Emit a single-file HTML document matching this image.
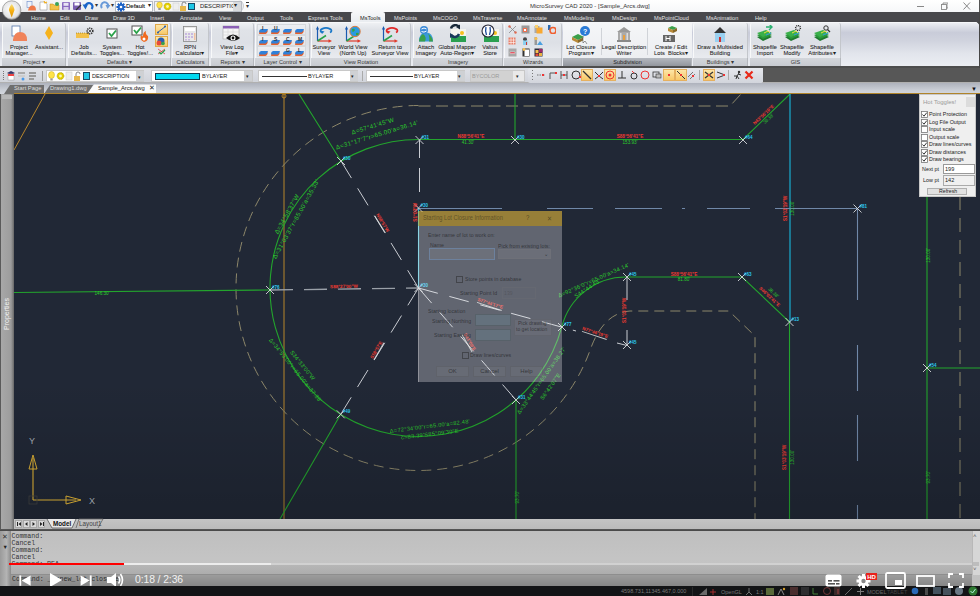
<!DOCTYPE html>
<html><head><meta charset="utf-8">
<style>
*{margin:0;padding:0;box-sizing:border-box}
html,body{width:980px;height:596px;overflow:hidden;background:#212836;font-family:"Liberation Sans",sans-serif}
.a{position:absolute}
.t{position:absolute;white-space:nowrap;line-height:1}

</style></head><body>
<div class="a" style="left:0px;top:0px;width:980px;height:12px;background:linear-gradient(#ffffff,#f6f7f9)"></div>
<div class="a" style="left:22px;top:0px;width:222px;height:12px;background:linear-gradient(#f4f5f7,#e9ebee);border-radius:0 6px 6px 0;border-right:1px solid #c9ccd1"></div>
<svg class="a" style="left:26px;top:1px" width="10" height="10" viewBox="0 0 10 10"><rect x="1" y="0.5" width="5" height="6" fill="#eef3fb" stroke="#6a8ac8" stroke-width=".6"/><path d="M2 9.5 Q3 4.5 6.5 4.5 Q10 4.5 10 9.5Z" fill="#f07a4a"/></svg>
<svg class="a" style="left:38px;top:1px" width="10" height="10" viewBox="0 0 10 10"><path d="M2 1 H7 L9 3 V9 H2Z" fill="#fff" stroke="#999" stroke-width=".6"/><path d="M6 0 L7 2 L9 1" stroke="#f2b01e" stroke-width="1.2" fill="none"/></svg>
<svg class="a" style="left:49px;top:1px" width="11" height="10" viewBox="0 0 11 10"><path d="M1 3 H4 L5 4 H10 V9 H1Z" fill="#f2c24a" stroke="#c98a10" stroke-width=".5"/><circle cx="8" cy="3" r="2" fill="#3aa35a"/></svg>
<svg class="a" style="left:60.5px;top:1px" width="10" height="10" viewBox="0 0 10 10"><rect x="1" y="1" width="8" height="8" rx="1" fill="#8a6ac0"/><rect x="2.5" y="1.8" width="5" height="3" fill="#e8e4f4"/><rect x="2.5" y="6" width="5" height="3" fill="#d8d0ea"/></svg>
<svg class="a" style="left:71.5px;top:1px" width="10" height="10" viewBox="0 0 10 10"><rect x="1" y="1" width="8" height="8" rx="1" fill="#7a5fb0"/><rect x="2.5" y="1.5" width="5" height="3" fill="#fff"/><path d="M4 9 L9 4" stroke="#333" stroke-width="1.2"/></svg>
<svg class="a" style="left:82px;top:1px" width="12" height="10" viewBox="0 0 12 10"><path d="M3.5 6 A3.5 3.5 0 1 1 9.5 8" stroke="#1a64c8" stroke-width="2.2" fill="none"/><path d="M0.5 3.5 L3.5 8.5 L6 3.5Z" fill="#1a64c8"/></svg>
<div class="t" style="left:94.5px;top:2px;font-size:6px;color:#333;">&#9662;</div>
<svg class="a" style="left:99px;top:1px" width="12" height="10" viewBox="0 0 12 10"><path d="M9 6 A3.5 3.5 0 1 0 3 7" stroke="#6a9ad8" stroke-width="2" fill="none"/><path d="M11.5 4 L8.5 8 L6.5 4Z" fill="#6a9ad8"/></svg>
<div class="t" style="left:111px;top:2px;font-size:6px;color:#333;">&#9662;</div>
<div class="a" style="left:115px;top:1px;width:38px;height:11px;background:#fff;border:1px solid #b8bcc4"></div>
<svg class="a" style="left:116px;top:1.5px" width="10" height="10" viewBox="0 0 10 10"><g transform="translate(5,5)" fill="#1f63c6"><circle r="3.2"/><rect x="-1" y="-4.6" width="2" height="9.2"/><rect x="-4.6" y="-1" width="9.2" height="2"/><rect x="-1" y="-4.6" width="2" height="9.2" transform="rotate(45)"/><rect x="-1" y="-4.6" width="2" height="9.2" transform="rotate(-45)"/></g><circle cx="5" cy="5" r="1.3" fill="#fff"/></svg>
<div class="t" style="left:126px;top:3.2px;font-size:6px;color:#111;-webkit-text-stroke:.1px #111">Default</div>
<div class="t" style="left:148px;top:3px;font-size:5.5px;color:#222;">&#9662;</div>
<div class="a" style="left:154px;top:1px;width:88px;height:11px;background:#f4f4f4;border:1px solid #b8bcc4"></div>
<svg class="a" style="left:155px;top:1px" width="9" height="10" viewBox="0 0 9 10"><ellipse cx="4.5" cy="4" rx="2.8" ry="3" fill="#ffe34a" stroke="#c0a000" stroke-width=".4"/><rect x="3.3" y="7" width="2.4" height="2" fill="#999"/></svg>
<svg class="a" style="left:163px;top:2px" width="9" height="9" viewBox="0 0 9 9"><circle cx="4.5" cy="4.5" r="3.4" fill="#e6d200" stroke="#9a8a00" stroke-width=".6" stroke-dasharray="1.2 .6"/><circle cx="4.5" cy="4.5" r="1.4" fill="#fff8b0"/></svg>
<svg class="a" style="left:172px;top:2px" width="8" height="9" viewBox="0 0 8 9"><rect x="1" y="1" width="6" height="7" fill="#eee" stroke="#ccc" stroke-width=".5"/></svg>
<svg class="a" style="left:179px;top:1px" width="9" height="10" viewBox="0 0 9 10"><rect x="1" y="5" width="6" height="5" fill="#e8b84a"/><path d="M3 5 V3 A2 2 0 0 1 7 3" stroke="#888" stroke-width="1" fill="none"/></svg>
<div class="a" style="left:188px;top:3px;width:7px;height:7px;background:#1fc7e6;border:1px solid #1a4a66"></div>
<div class="t" style="left:200px;top:3.5px;font-size:5.8px;color:#222;width:33px;overflow:hidden">DESCRIPTIO</div>
<div class="a" style="left:233px;top:2px;width:8px;height:9px;background:#d8dadd"></div>
<div class="t" style="left:234px;top:3px;font-size:5.5px;color:#222;">&#9662;</div>
<div class="t" style="left:246px;top:2px;font-size:6px;color:#333;border-top:1px solid #333;line-height:6px">&#9662;</div>
<div class="t" style="left:530px;top:3px;font-size:6px;color:#333;">MicroSurvey CAD 2020 - [Sample_Arcs.dwg]</div>
<div class="a" style="left:917px;top:5.5px;width:7px;height:1px;background:#888"></div>
<svg class="a" style="left:939.5px;top:1.5px" width="8" height="8" viewBox="0 0 8 8"><rect x="1.5" y="2.5" width="5" height="5" fill="none" stroke="#888" stroke-width=".9"/><path d="M3 2.5 V1 H8 V6 H6.5" fill="none" stroke="#888" stroke-width=".9"/></svg>
<svg class="a" style="left:962px;top:1px" width="9" height="10" viewBox="0 0 9 10"><path d="M1.5 1.5 L8 8.5 M8 1.5 L1.5 8.5" stroke="#888" stroke-width="1"/></svg>
<div class="a" style="left:0px;top:12px;width:980px;height:10px;background:#48484c"></div>
<div class="a" style="left:351px;top:12px;width:34px;height:10px;background:linear-gradient(#f6f7f9,#e9ecf0);border-radius:2px 2px 0 0"></div>
<div class="t" style="left:31px;top:15.6px;font-size:5.6px;color:#e2e2e2;">Home</div>
<div class="t" style="left:60px;top:15.6px;font-size:5.6px;color:#e2e2e2;">Edit</div>
<div class="t" style="left:85px;top:15.6px;font-size:5.6px;color:#e2e2e2;">Draw</div>
<div class="t" style="left:113px;top:15.6px;font-size:5.6px;color:#e2e2e2;">Draw 3D</div>
<div class="t" style="left:150px;top:15.6px;font-size:5.6px;color:#e2e2e2;">Insert</div>
<div class="t" style="left:180px;top:15.6px;font-size:5.6px;color:#e2e2e2;">Annotate</div>
<div class="t" style="left:219px;top:15.6px;font-size:5.6px;color:#e2e2e2;">View</div>
<div class="t" style="left:247px;top:15.6px;font-size:5.6px;color:#e2e2e2;">Output</div>
<div class="t" style="left:280px;top:15.6px;font-size:5.6px;color:#e2e2e2;">Tools</div>
<div class="t" style="left:308px;top:15.6px;font-size:5.6px;color:#e2e2e2;">Express Tools</div>
<div class="t" style="left:394px;top:15.6px;font-size:5.6px;color:#e2e2e2;">MsPoints</div>
<div class="t" style="left:433px;top:15.6px;font-size:5.6px;color:#e2e2e2;">MsCOGO</div>
<div class="t" style="left:473px;top:15.6px;font-size:5.6px;color:#e2e2e2;">MsTraverse</div>
<div class="t" style="left:517px;top:15.6px;font-size:5.6px;color:#e2e2e2;">MsAnnotate</div>
<div class="t" style="left:564px;top:15.6px;font-size:5.6px;color:#e2e2e2;">MsModeling</div>
<div class="t" style="left:612px;top:15.6px;font-size:5.6px;color:#e2e2e2;">MsDesign</div>
<div class="t" style="left:654px;top:15.6px;font-size:5.6px;color:#e2e2e2;">MsPointCloud</div>
<div class="t" style="left:706px;top:15.6px;font-size:5.6px;color:#e2e2e2;">MsAnimation</div>
<div class="t" style="left:755px;top:15.6px;font-size:5.6px;color:#e2e2e2;">Help</div>
<div class="t" style="left:360px;top:15.6px;font-size:5.6px;color:#222;">MsTools</div>
<svg class="a" style="left:0px;top:0px" width="26" height="22" viewBox="0 0 26 22"><defs><radialGradient id="ab" cx="45%" cy="45%" r="60%"><stop offset="0" stop-color="#ffffff"/><stop offset=".75" stop-color="#e4e4e4"/><stop offset="1" stop-color="#a8a8a8"/></radialGradient><linearGradient id="pb" x1="0" y1="0" x2="0" y2="1"><stop offset="0" stop-color="#f4e080"/><stop offset=".5" stop-color="#f6b010"/><stop offset="1" stop-color="#d89010"/></linearGradient></defs><circle cx="11.7" cy="10.1" r="9.3" fill="url(#ab)" stroke="#8a8a8a" stroke-width=".7"/><path d="M11.7 4 C12.8 5.5 14.5 8 14.5 10 L11.7 17.5 L8.9 10 C8.9 8 10.6 5.5 11.7 4Z" fill="url(#pb)"/></svg>
<div class="a" style="left:0px;top:22px;width:980px;height:45px;background:linear-gradient(#eceef3 0,#dfe1e9 8%,#c9ccd9 22%,#d0d3de 40%,#e2e5ec 70%,#eceef3 100%);border-top:1px solid #f6f7f9"></div>
<div class="a" style="left:2px;top:23px;width:64px;height:44px;background:linear-gradient(#eef0f3 0,#e0e3e8 15%,#dde0e6 45%,#e9ebef 80%,#eceef1 100%);border-left:1px solid #f8f9fa;border-right:1px solid #c3c6cb;border-radius:2px 2px 0 0"></div>
<div class="a" style="left:2px;top:58px;width:64px;height:9px;background:linear-gradient(#d3d6db,#c6c9cf);border-right:1px solid #b5b8bd"></div>
<div class="t" style="left:-66.0px;width:200px;text-align:center;top:59.6px;font-size:5.6px;color:#383838;">Project &#9662;</div>
<div class="a" style="left:68px;top:23px;width:103px;height:44px;background:linear-gradient(#eef0f3 0,#e0e3e8 15%,#dde0e6 45%,#e9ebef 80%,#eceef1 100%);border-left:1px solid #f8f9fa;border-right:1px solid #c3c6cb;border-radius:2px 2px 0 0"></div>
<div class="a" style="left:68px;top:58px;width:103px;height:9px;background:linear-gradient(#d3d6db,#c6c9cf);border-right:1px solid #b5b8bd"></div>
<div class="t" style="left:19.5px;width:200px;text-align:center;top:59.6px;font-size:5.6px;color:#383838;">Defaults &#9662;</div>
<div class="a" style="left:172px;top:23px;width:37px;height:44px;background:linear-gradient(#eef0f3 0,#e0e3e8 15%,#dde0e6 45%,#e9ebef 80%,#eceef1 100%);border-left:1px solid #f8f9fa;border-right:1px solid #c3c6cb;border-radius:2px 2px 0 0"></div>
<div class="a" style="left:172px;top:58px;width:37px;height:9px;background:linear-gradient(#d3d6db,#c6c9cf);border-right:1px solid #b5b8bd"></div>
<div class="t" style="left:90.5px;width:200px;text-align:center;top:59.6px;font-size:5.6px;color:#383838;">Calculators</div>
<div class="a" style="left:211px;top:23px;width:43px;height:44px;background:linear-gradient(#eef0f3 0,#e0e3e8 15%,#dde0e6 45%,#e9ebef 80%,#eceef1 100%);border-left:1px solid #f8f9fa;border-right:1px solid #c3c6cb;border-radius:2px 2px 0 0"></div>
<div class="a" style="left:211px;top:58px;width:43px;height:9px;background:linear-gradient(#d3d6db,#c6c9cf);border-right:1px solid #b5b8bd"></div>
<div class="t" style="left:132.5px;width:200px;text-align:center;top:59.6px;font-size:5.6px;color:#383838;">Reports &#9662;</div>
<div class="a" style="left:255px;top:23px;width:55px;height:44px;background:linear-gradient(#eef0f3 0,#e0e3e8 15%,#dde0e6 45%,#e9ebef 80%,#eceef1 100%);border-left:1px solid #f8f9fa;border-right:1px solid #c3c6cb;border-radius:2px 2px 0 0"></div>
<div class="a" style="left:255px;top:58px;width:55px;height:9px;background:linear-gradient(#d3d6db,#c6c9cf);border-right:1px solid #b5b8bd"></div>
<div class="t" style="left:182.5px;width:200px;text-align:center;top:59.6px;font-size:5.6px;color:#383838;">Layer Control &#9662;</div>
<div class="a" style="left:311px;top:23px;width:100px;height:44px;background:linear-gradient(#eef0f3 0,#e0e3e8 15%,#dde0e6 45%,#e9ebef 80%,#eceef1 100%);border-left:1px solid #f8f9fa;border-right:1px solid #c3c6cb;border-radius:2px 2px 0 0"></div>
<div class="a" style="left:311px;top:58px;width:100px;height:9px;background:linear-gradient(#d3d6db,#c6c9cf);border-right:1px solid #b5b8bd"></div>
<div class="t" style="left:261.0px;width:200px;text-align:center;top:59.6px;font-size:5.6px;color:#383838;">View Rotation</div>
<div class="a" style="left:413px;top:23px;width:90px;height:44px;background:linear-gradient(#eef0f3 0,#e0e3e8 15%,#dde0e6 45%,#e9ebef 80%,#eceef1 100%);border-left:1px solid #f8f9fa;border-right:1px solid #c3c6cb;border-radius:2px 2px 0 0"></div>
<div class="a" style="left:413px;top:58px;width:90px;height:9px;background:linear-gradient(#d3d6db,#c6c9cf);border-right:1px solid #b5b8bd"></div>
<div class="t" style="left:358.0px;width:200px;text-align:center;top:59.6px;font-size:5.6px;color:#383838;">Imagery</div>
<div class="a" style="left:504px;top:23px;width:58px;height:44px;background:linear-gradient(#eef0f3 0,#e0e3e8 15%,#dde0e6 45%,#e9ebef 80%,#eceef1 100%);border-left:1px solid #f8f9fa;border-right:1px solid #c3c6cb;border-radius:2px 2px 0 0"></div>
<div class="a" style="left:504px;top:58px;width:58px;height:9px;background:linear-gradient(#d3d6db,#c6c9cf);border-right:1px solid #b5b8bd"></div>
<div class="t" style="left:433.0px;width:200px;text-align:center;top:59.6px;font-size:5.6px;color:#383838;">Wizards</div>
<div class="a" style="left:563px;top:23px;width:129px;height:44px;background:linear-gradient(#eef0f3 0,#e0e3e8 15%,#dde0e6 45%,#e9ebef 80%,#eceef1 100%);border-left:1px solid #f8f9fa;border-right:1px solid #c3c6cb;border-radius:2px 2px 0 0"></div>
<div class="a" style="left:563px;top:58px;width:129px;height:9px;background:linear-gradient(#b4b8bf,#8e9299);border-right:1px solid #b5b8bd"></div>
<div class="t" style="left:527.5px;width:200px;text-align:center;top:59.6px;font-size:5.6px;color:#222;">Subdivision</div>
<div class="a" style="left:693px;top:23px;width:55px;height:44px;background:linear-gradient(#eef0f3 0,#e0e3e8 15%,#dde0e6 45%,#e9ebef 80%,#eceef1 100%);border-left:1px solid #f8f9fa;border-right:1px solid #c3c6cb;border-radius:2px 2px 0 0"></div>
<div class="a" style="left:693px;top:58px;width:55px;height:9px;background:linear-gradient(#d3d6db,#c6c9cf);border-right:1px solid #b5b8bd"></div>
<div class="t" style="left:620.5px;width:200px;text-align:center;top:59.6px;font-size:5.6px;color:#383838;">Buildings &#9662;</div>
<div class="a" style="left:750px;top:23px;width:91px;height:44px;background:linear-gradient(#eef0f3 0,#e0e3e8 15%,#dde0e6 45%,#e9ebef 80%,#eceef1 100%);border-left:1px solid #f8f9fa;border-right:1px solid #c3c6cb;border-radius:2px 2px 0 0"></div>
<div class="a" style="left:750px;top:58px;width:91px;height:9px;background:linear-gradient(#d3d6db,#c6c9cf);border-right:1px solid #b5b8bd"></div>
<div class="t" style="left:695.5px;width:200px;text-align:center;top:59.6px;font-size:5.6px;color:#383838;">GIS</div>
<div class="a" style="left:0px;top:66px;width:980px;height:2px;background:#4d4d4d"></div>
<div class="a" style="left:978.5px;top:12px;width:1.5px;height:56px;background:#464646"></div>
<div class="a" style="left:975.5px;top:22px;width:3px;height:3px;background:radial-gradient(circle at 0 100%,transparent 2.5px,#464646 3px)"></div>
<div class="a" style="left:979px;top:0px;width:1px;height:12px;background:#555"></div>
<svg class="a" style="left:10px;top:25px" width="18" height="18" viewBox="0 0 18 18"><rect x="2" y="1" width="8" height="10" fill="#fff" stroke="#5577aa" stroke-width=".8"/><path d="M3 15 Q4 7 10 7 Q17 7 17 15Z" fill="#f0835a"/><rect x="3" y="14" width="14" height="2" fill="#f0835a"/></svg>
<div class="t" style="left:-81px;width:200px;text-align:center;top:44.7px;font-size:5.75px;color:#1e1e1e;-webkit-text-stroke:.06px #1e1e1e">Project</div>
<div class="t" style="left:-81px;width:200px;text-align:center;top:51.2px;font-size:5.75px;color:#1e1e1e;-webkit-text-stroke:.06px #1e1e1e">Manager...</div>
<svg class="a" style="left:44px;top:25px" width="10" height="16" viewBox="0 0 10 16"><path d="M5 1 L9 8 L5 15 L1 8Z" fill="#f6b21b"/></svg>
<div class="t" style="left:-51px;width:200px;text-align:center;top:44.7px;font-size:5.75px;color:#1e1e1e;-webkit-text-stroke:.06px #1e1e1e">Assistant...</div>
<svg class="a" style="left:76px;top:27px" width="18" height="12" viewBox="0 0 18 12"><rect x="0" y="6" width="13" height="5" fill="#f3c14a"/><path d="M0 6 H13" stroke="#8a6a00" stroke-width=".6" stroke-dasharray="1 1"/><circle cx="14" cy="4" r="2.8" fill="none" stroke="#333" stroke-width="1.6" stroke-dasharray="1.2 .8"/><circle cx="14" cy="4" r="1" fill="#333"/></svg>
<div class="t" style="left:-16px;width:200px;text-align:center;top:44.7px;font-size:5.75px;color:#1e1e1e;-webkit-text-stroke:.06px #1e1e1e">Job</div>
<div class="t" style="left:-16px;width:200px;text-align:center;top:51.2px;font-size:5.75px;color:#1e1e1e;-webkit-text-stroke:.06px #1e1e1e">Defaults...</div>
<svg class="a" style="left:106px;top:28px" width="12" height="11" viewBox="0 0 12 11"><rect x="1" y="1" width="10" height="9" fill="#fff" stroke="#555" stroke-width="1"/><path d="M3 5 L5.5 8 L10 2.5" stroke="#2aa24a" stroke-width="1.8" fill="none"/></svg>
<div class="t" style="left:12px;width:200px;text-align:center;top:44.7px;font-size:5.75px;color:#1e1e1e;-webkit-text-stroke:.06px #1e1e1e">System</div>
<div class="t" style="left:12px;width:200px;text-align:center;top:51.2px;font-size:5.75px;color:#1e1e1e;-webkit-text-stroke:.06px #1e1e1e">Toggles...</div>
<svg class="a" style="left:131px;top:25px" width="19" height="18" viewBox="0 0 19 18"><rect x="1" y="1" width="10" height="9" fill="#fff" stroke="#555" stroke-width="1"/><path d="M3 5 L5.5 8 L10 2.5" stroke="#2aa24a" stroke-width="1.8" fill="none"/><path d="M13 17 Q8 15 10 10 Q11 12 12 11 Q12 7 15 6 Q14 9 17 11 Q18 16 13 17Z" fill="#f06a20"/><circle cx="13" cy="14" r="1.5" fill="#fff"/></svg>
<div class="t" style="left:40px;width:200px;text-align:center;top:44.7px;font-size:5.75px;color:#1e1e1e;-webkit-text-stroke:.06px #1e1e1e">Hot</div>
<div class="t" style="left:40px;width:200px;text-align:center;top:51.2px;font-size:5.75px;color:#1e1e1e;-webkit-text-stroke:.06px #1e1e1e">Toggles!...</div>
<div class="a" style="left:155px;top:24px;width:13px;height:11px;background:linear-gradient(#fde6a8,#f7c96a);border:1px solid #e0a848"></div>
<svg class="a" style="left:156px;top:25px" width="11" height="9" viewBox="0 0 11 9"><path d="M1 8 L10 1" stroke="#2a5fb0" stroke-width="1"/><circle cx="2" cy="7.5" r="1" fill="#2a5fb0"/><circle cx="9" cy="1.5" r="1" fill="#2a5fb0"/></svg>
<div class="a" style="left:155px;top:36px;width:13px;height:11px;background:linear-gradient(#fde6a8,#f7c96a);border:1px solid #e0a848"></div>
<svg class="a" style="left:156px;top:37px" width="11" height="9" viewBox="0 0 11 9"><circle cx="5" cy="4" r="3.5" fill="#2a5fb0"/><circle cx="3" cy="6" r="2.5" fill="#e84a3a"/><circle cx="7" cy="6.5" r="1.8" fill="#3aa04a"/></svg>
<svg class="a" style="left:157px;top:48px" width="9" height="7" viewBox="0 0 9 7"><path d="M1 1 L8 6 M8 1 L1 6" stroke="#e04040" stroke-width=".8"/><path d="M2 4 L4 6 L8 2" stroke="#2aa24a" stroke-width="1.2" fill="none"/></svg>
<svg class="a" style="left:183px;top:26px" width="14" height="16" viewBox="0 0 14 16"><rect x=".5" y=".5" width="13" height="15" fill="#e8e8e8" stroke="#888" stroke-width=".8"/><rect x="2" y="2" width="10" height="3" fill="#fff"/><g fill="#c8b8e0"><rect x="2" y="7" width="2" height="2"/><rect x="5" y="7" width="2" height="2"/><rect x="8" y="7" width="2" height="2"/><rect x="2" y="10" width="2" height="2"/><rect x="5" y="10" width="2" height="2"/><rect x="8" y="10" width="2" height="2"/><rect x="2" y="13" width="2" height="1.5"/><rect x="5" y="13" width="2" height="1.5"/></g><rect x="11" y="7" width="1.5" height="7" fill="#f0c0a0"/></svg>
<div class="t" style="left:90px;width:200px;text-align:center;top:44.7px;font-size:5.75px;color:#1e1e1e;-webkit-text-stroke:.06px #1e1e1e">RPN</div>
<div class="t" style="left:90px;width:200px;text-align:center;top:51.2px;font-size:5.75px;color:#1e1e1e;-webkit-text-stroke:.06px #1e1e1e">Calculator&#9662;</div>
<svg class="a" style="left:222px;top:25px" width="21" height="18" viewBox="0 0 21 18"><rect x="1" y="1" width="16" height="13" fill="#f4f4f4" stroke="#aaa" stroke-width=".6"/><rect x="1" y="1" width="16" height="2.5" fill="#8a5fb5"/><path d="M1 7 H17 M1 10 H17 M6 3 V14 M11 3 V14" stroke="#ccc" stroke-width=".5"/><path d="M4 13 Q11 6 18 13 Q11 19 4 13Z" fill="#111"/><circle cx="11" cy="13" r="2.5" fill="#fff"/><circle cx="11" cy="13" r="1.4" fill="#111"/></svg>
<div class="t" style="left:132px;width:200px;text-align:center;top:44.7px;font-size:5.75px;color:#1e1e1e;-webkit-text-stroke:.06px #1e1e1e">View Log</div>
<div class="t" style="left:132px;width:200px;text-align:center;top:51.2px;font-size:5.75px;color:#1e1e1e;-webkit-text-stroke:.06px #1e1e1e">File&#9662;</div>
<div class="a" style="left:257px;top:24.0px;width:49px;height:10.5px;background:linear-gradient(#eceef2,#e4e6ea);border:1px solid #d6d9dd"></div>
<svg class="a" style="left:257.5px;top:25.0px" width="11" height="10" viewBox="0 0 11 10"><path d="M1 8.5 Q1 6 3 5.5 H10 Q9.5 8 7.5 9 H1.5Z" fill="#e8602a"/><path d="M1 7 Q1 4.5 3 4 H10 Q9.5 6.5 7.5 7.5 H1.5Z" fill="#2f80d8"/><text x="4" y="4.5" font-size="5" font-weight="bold" fill="#333" font-family="Liberation Sans">I</text></svg>
<svg class="a" style="left:269.7px;top:25.0px" width="11" height="10" viewBox="0 0 11 10"><path d="M1 8.5 Q1 6 3 5.5 H10 Q9.5 8 7.5 9 H1.5Z" fill="#e8602a"/><path d="M1 7 Q1 4.5 3 4 H10 Q9.5 6.5 7.5 7.5 H1.5Z" fill="#2f80d8"/><text x="4" y="4.5" font-size="5" font-weight="bold" fill="#333" font-family="Liberation Sans">U</text></svg>
<svg class="a" style="left:281.9px;top:25.0px" width="11" height="10" viewBox="0 0 11 10"><path d="M1 8.5 Q1 6 3 5.5 H10 Q9.5 8 7.5 9 H1.5Z" fill="#e8602a"/><path d="M1 7 Q1 4.5 3 4 H10 Q9.5 6.5 7.5 7.5 H1.5Z" fill="#2f80d8"/><text x="4" y="4.5" font-size="5" font-weight="bold" fill="#333" font-family="Liberation Sans"></text></svg>
<svg class="a" style="left:294.1px;top:25.0px" width="11" height="10" viewBox="0 0 11 10"><path d="M1 8.5 Q1 6 3 5.5 H10 Q9.5 8 7.5 9 H1.5Z" fill="#e8602a"/><path d="M1 7 Q1 4.5 3 4 H10 Q9.5 6.5 7.5 7.5 H1.5Z" fill="#2f80d8"/><text x="4" y="4.5" font-size="5" font-weight="bold" fill="#333" font-family="Liberation Sans"></text></svg>
<div class="a" style="left:257px;top:35.2px;width:49px;height:10.5px;background:linear-gradient(#eceef2,#e4e6ea);border:1px solid #d6d9dd"></div>
<svg class="a" style="left:257.5px;top:36.2px" width="11" height="10" viewBox="0 0 11 10"><path d="M1 8.5 Q1 6 3 5.5 H10 Q9.5 8 7.5 9 H1.5Z" fill="#e8602a"/><path d="M1 7 Q1 4.5 3 4 H10 Q9.5 6.5 7.5 7.5 H1.5Z" fill="#2f80d8"/><text x="4" y="4.5" font-size="5" font-weight="bold" fill="#333" font-family="Liberation Sans">I</text></svg>
<svg class="a" style="left:269.7px;top:36.2px" width="11" height="10" viewBox="0 0 11 10"><path d="M1 8.5 Q1 6 3 5.5 H10 Q9.5 8 7.5 9 H1.5Z" fill="#e8602a"/><path d="M1 7 Q1 4.5 3 4 H10 Q9.5 6.5 7.5 7.5 H1.5Z" fill="#2f80d8"/><text x="4" y="4.5" font-size="5" font-weight="bold" fill="#333" font-family="Liberation Sans">S</text></svg>
<svg class="a" style="left:281.9px;top:36.2px" width="11" height="10" viewBox="0 0 11 10"><path d="M1 8.5 Q1 6 3 5.5 H10 Q9.5 8 7.5 9 H1.5Z" fill="#e8602a"/><path d="M1 7 Q1 4.5 3 4 H10 Q9.5 6.5 7.5 7.5 H1.5Z" fill="#2f80d8"/><text x="4" y="4.5" font-size="5" font-weight="bold" fill="#333" font-family="Liberation Sans">C</text></svg>
<svg class="a" style="left:294.1px;top:36.2px" width="11" height="10" viewBox="0 0 11 10"><path d="M1 8.5 Q1 6 3 5.5 H10 Q9.5 8 7.5 9 H1.5Z" fill="#e8602a"/><path d="M1 7 Q1 4.5 3 4 H10 Q9.5 6.5 7.5 7.5 H1.5Z" fill="#2f80d8"/><text x="4" y="4.5" font-size="5" font-weight="bold" fill="#333" font-family="Liberation Sans">M</text></svg>
<div class="a" style="left:257px;top:46.4px;width:49px;height:10.5px;background:linear-gradient(#eceef2,#e4e6ea);border:1px solid #d6d9dd"></div>
<svg class="a" style="left:257.5px;top:47.4px" width="11" height="10" viewBox="0 0 11 10"><path d="M1 8.5 Q1 6 3 5.5 H10 Q9.5 8 7.5 9 H1.5Z" fill="#e8602a"/><path d="M1 7 Q1 4.5 3 4 H10 Q9.5 6.5 7.5 7.5 H1.5Z" fill="#2f80d8"/><text x="4" y="4.5" font-size="5" font-weight="bold" fill="#333" font-family="Liberation Sans"></text></svg>
<svg class="a" style="left:269.7px;top:47.4px" width="11" height="10" viewBox="0 0 11 10"><path d="M1 8.5 Q1 6 3 5.5 H10 Q9.5 8 7.5 9 H1.5Z" fill="#e8602a"/><path d="M1 7 Q1 4.5 3 4 H10 Q9.5 6.5 7.5 7.5 H1.5Z" fill="#2f80d8"/><text x="4" y="4.5" font-size="5" font-weight="bold" fill="#333" font-family="Liberation Sans"></text></svg>
<svg class="a" style="left:281.9px;top:47.4px" width="11" height="10" viewBox="0 0 11 10"><path d="M1 8.5 Q1 6 3 5.5 H10 Q9.5 8 7.5 9 H1.5Z" fill="#e8602a"/><path d="M1 7 Q1 4.5 3 4 H10 Q9.5 6.5 7.5 7.5 H1.5Z" fill="#2f80d8"/><text x="4" y="4.5" font-size="5" font-weight="bold" fill="#333" font-family="Liberation Sans">G</text></svg>
<svg class="a" style="left:294.1px;top:47.4px" width="11" height="10" viewBox="0 0 11 10"><path d="M1 8.5 Q1 6 3 5.5 H10 Q9.5 8 7.5 9 H1.5Z" fill="#e8602a"/><path d="M1 7 Q1 4.5 3 4 H10 Q9.5 6.5 7.5 7.5 H1.5Z" fill="#2f80d8"/><text x="4" y="4.5" font-size="5" font-weight="bold" fill="#333" font-family="Liberation Sans">L</text></svg>
<svg class="a" style="left:315px;top:25px" width="19" height="18" viewBox="0 0 19 18"><path d="M2.5 3 V16" stroke="#1a5ab0" stroke-width="1.2"/><path d="M1 4.5 L2.5 1 L4 4.5Z" fill="#1a5ab0"/><path d="M2.5 16 H15" stroke="#e03a2a" stroke-width="1.2"/><path d="M13.5 14.3 L17 16 L13.5 17.7Z" fill="#e03a2a"/><path d="M2.5 16 L11 10.5" stroke="#2aa24a" stroke-width="1.5"/><path d="M7 7.5 A5.5 2.6 0 1 1 15 7.5" stroke="#1a78c8" stroke-width="1.7" fill="none"/><path d="M5.5 5.5 L7 9 L9.5 6.5Z" fill="#1a78c8"/></svg>
<div class="t" style="left:224px;width:200px;text-align:center;top:44.7px;font-size:5.75px;color:#1e1e1e;-webkit-text-stroke:.06px #1e1e1e">Surveyor</div>
<div class="t" style="left:224px;width:200px;text-align:center;top:51.2px;font-size:5.75px;color:#1e1e1e;-webkit-text-stroke:.06px #1e1e1e">View</div>
<svg class="a" style="left:344px;top:25px" width="19" height="18" viewBox="0 0 19 18"><path d="M2.5 3 V16" stroke="#1a5ab0" stroke-width="1.2"/><path d="M1 4.5 L2.5 1 L4 4.5Z" fill="#1a5ab0"/><path d="M2.5 16 H15" stroke="#e03a2a" stroke-width="1.2"/><path d="M13.5 14.3 L17 16 L13.5 17.7Z" fill="#e03a2a"/><path d="M2.5 16 L11 10.5" stroke="#2aa24a" stroke-width="1.5"/><circle cx="11" cy="6.5" r="5.2" fill="#2a9ae0" stroke="#e07a3a" stroke-width="1"/><path d="M8 4 Q10 3 11 5 Q10 7 8.5 7Z M12 8 Q14 7 15 9 Q13 11 12 10Z" fill="#3aa040"/></svg>
<div class="t" style="left:253px;width:200px;text-align:center;top:44.7px;font-size:5.75px;color:#1e1e1e;-webkit-text-stroke:.06px #1e1e1e">World View</div>
<div class="t" style="left:253px;width:200px;text-align:center;top:51.2px;font-size:5.75px;color:#1e1e1e;-webkit-text-stroke:.06px #1e1e1e">(North Up)</div>
<svg class="a" style="left:381px;top:25px" width="19" height="18" viewBox="0 0 19 18"><path d="M2.5 3 V16" stroke="#1a5ab0" stroke-width="1.2"/><path d="M1 4.5 L2.5 1 L4 4.5Z" fill="#1a5ab0"/><path d="M2.5 16 H15" stroke="#e03a2a" stroke-width="1.2"/><path d="M13.5 14.3 L17 16 L13.5 17.7Z" fill="#e03a2a"/><path d="M2.5 16 L11 10.5" stroke="#2aa24a" stroke-width="1.5"/><path d="M7 7.5 A5.5 2.6 0 1 1 15 7.5" stroke="#e02a2a" stroke-width="1.7" fill="none"/><path d="M5.5 5.5 L7 9 L9.5 6.5Z" fill="#e02a2a"/></svg>
<div class="t" style="left:290px;width:200px;text-align:center;top:44.7px;font-size:5.75px;color:#1e1e1e;-webkit-text-stroke:.06px #1e1e1e">Return to</div>
<div class="t" style="left:290px;width:200px;text-align:center;top:51.2px;font-size:5.75px;color:#1e1e1e;-webkit-text-stroke:.06px #1e1e1e">Surveyor View</div>
<svg class="a" style="left:418px;top:25px" width="16" height="17" viewBox="0 0 16 17"><path d="M1 16.5 Q1 7.5 8 7.5 Q15 7.5 15 16.5Z" fill="#3a9ad8"/><path d="M1 16.5 Q1.5 11 5 9 Q9 12 7 16.5Z" fill="#3aa04a"/><path d="M10 9 Q14 11 15 16.5 H11 Q12 12 10 9Z" fill="#3aa04a"/><circle cx="6" cy="5" r="4" fill="#3a8ad8"/><path d="M3.5 4 Q6 2 8.5 4 M3.5 6.5 Q6 8 8.5 6" stroke="#fff" stroke-width="1" fill="none"/></svg>
<div class="t" style="left:326px;width:200px;text-align:center;top:44.7px;font-size:5.75px;color:#1e1e1e;-webkit-text-stroke:.06px #1e1e1e">Attach</div>
<div class="t" style="left:326px;width:200px;text-align:center;top:51.2px;font-size:5.75px;color:#1e1e1e;-webkit-text-stroke:.06px #1e1e1e">Imagery</div>
<svg class="a" style="left:448px;top:24px" width="19" height="19" viewBox="0 0 19 19"><rect x="3" y="5" width="15" height="13" fill="#f4f4ee"/><rect x="3" y="12" width="15" height="6" fill="#2aa050"/><circle cx="14" cy="9" r="2" fill="#f6c020"/><path d="M3 4.5 A4.5 4.5 0 0 1 11 3" stroke="#1a2a3a" stroke-width="2.4" fill="none"/><path d="M12 0.5 L12 5.5 L8 3Z" fill="#1a2a3a"/><path d="M11 10 A4.5 4.5 0 0 1 3 11" stroke="#1a3a5a" stroke-width="2.4" fill="none"/><path d="M2 14 L2 9 L6 11.5Z" fill="#1a3a5a"/></svg>
<div class="t" style="left:357px;width:200px;text-align:center;top:44.7px;font-size:5.75px;color:#1e1e1e;-webkit-text-stroke:.06px #1e1e1e">Global Mapper</div>
<div class="t" style="left:357px;width:200px;text-align:center;top:51.2px;font-size:5.75px;color:#1e1e1e;-webkit-text-stroke:.06px #1e1e1e">Auto-Regen&#9662;</div>
<svg class="a" style="left:481px;top:24px" width="19" height="19" viewBox="0 0 19 19"><rect x="3" y="5" width="15" height="13" fill="#f4f4ee"/><rect x="3" y="12" width="15" height="6" fill="#2aa050"/><circle cx="14" cy="9" r="2" fill="#f6c020"/><circle cx="7" cy="7" r="6" fill="#fff" stroke="#2a2a3a" stroke-width="1.1"/><path d="M5 3 Q4 7 5.5 11 M9 3 Q10 7 8.5 11" stroke="#1a4a9a" stroke-width="1.3" fill="none"/></svg>
<div class="t" style="left:390px;width:200px;text-align:center;top:44.7px;font-size:5.75px;color:#1e1e1e;-webkit-text-stroke:.06px #1e1e1e">Valtus</div>
<div class="t" style="left:390px;width:200px;text-align:center;top:51.2px;font-size:5.75px;color:#1e1e1e;-webkit-text-stroke:.06px #1e1e1e">Store</div>
<svg class="a" style="left:508px;top:25px" width="9" height="9" viewBox="0 0 9 9"><path d="M1 1 L8 8 M8 1 L1 8" stroke="#888" stroke-width=".8"/><circle cx="1.5" cy="1.5" r="1.2" fill="#e06a50"/><circle cx="7.5" cy="7.5" r="1.2" fill="#e06a50"/></svg>
<svg class="a" style="left:521px;top:25px" width="9" height="9" viewBox="0 0 9 9"><rect x=".5" y=".5" width="8" height="8" fill="#9a9a9a"/><rect x="2" y="3" width="4" height="4" fill="#f07050"/><rect x="3" y="4" width="2" height="2" fill="#fff"/></svg>
<svg class="a" style="left:534px;top:25px" width="9" height="9" viewBox="0 0 9 9"><rect x=".5" y="1" width="5" height="7" fill="#aaa"/><rect x="2.5" y="2.5" width="6" height="6" fill="#f8a830"/><rect x="1" y="0" width="3" height="3" fill="#f8d070"/></svg>
<svg class="a" style="left:547px;top:25px" width="9" height="9" viewBox="0 0 9 9"><rect x="1" y="0" width="2.5" height="5" fill="#2a6ab0"/><circle cx="6" cy="5.5" r="3" fill="none" stroke="#f06030" stroke-width="1.6"/></svg>
<svg class="a" style="left:508px;top:37px" width="9" height="9" viewBox="0 0 9 9"><rect x=".5" y=".5" width="7" height="7" fill="#e8806a"/><path d="M3 .5 V7.5 M5.5 .5 V7.5 M.5 3 H7.5 M.5 5.5 H7.5" stroke="#fff" stroke-width=".6"/></svg>
<svg class="a" style="left:521px;top:37px" width="9" height="9" viewBox="0 0 9 9"><circle cx="4" cy="2.2" r="2" fill="#444"/><rect x="2" y="3.5" width="4.5" height="4.5" fill="#8ad0f0"/><rect x="5" y="5" width="1" height="3" fill="#c33"/></svg>
<svg class="a" style="left:534px;top:37px" width="9" height="9" viewBox="0 0 9 9"><rect x=".5" y="0" width="2.5" height="8" fill="#999"/><circle cx="2" cy="1.5" r="1.5" fill="#f8c050"/><path d="M3 8 L6 4 L9 8Z" fill="#4aa0e0"/></svg>
<svg class="a" style="left:508px;top:48px" width="9" height="9" viewBox="0 0 9 9"><rect x=".5" y=".5" width="8" height="8" fill="#a8a8a8"/><rect x="2" y="4" width="5" height="1.5" fill="#e03040"/><rect x="2" y="4" width="5" height="1.5" fill="none" stroke="#fff" stroke-width=".4"/></svg>
<svg class="a" style="left:521px;top:48px" width="9" height="9" viewBox="0 0 9 9"><rect x="1.5" y=".5" width="7" height="8" fill="#333"/><rect x="3.5" y="1.5" width="4.5" height="6.5" fill="#fff"/><circle cx="3" cy="1.5" r="1.4" fill="#f8c050"/></svg>
<svg class="a" style="left:534px;top:48px" width="9" height="9" viewBox="0 0 9 9"><rect x=".5" y=".5" width="8" height="8" fill="#2a2a3a"/><rect x="5" y="1" width="3.5" height="3.5" fill="#a02a6a"/><rect x="1.5" y="2" width="3" height="3" fill="#f8c050"/><rect x="5" y="5" width="3" height="3" fill="#e8b040"/><rect x="1.5" y="5.5" width="3" height="2.5" fill="#e04a3a"/></svg>
<div class="a" style="left:563px;top:23px;width:129px;height:35px;background:linear-gradient(#f5f6f8,#eceef1)"></div>
<svg class="a" style="left:570px;top:25px" width="22" height="20" viewBox="0 0 22 20"><path d="M2 12 L8 9 L14 12 L8 15Z" fill="#3aa04a"/><path d="M2 12 V15 L8 18 V15Z" fill="#b88a3a"/><path d="M14 12 V15 L8 18 V15Z" fill="#8a6a2a"/><circle cx="15" cy="6" r="5" fill="#2a7ad6"/><text x="13" y="8.5" font-size="7" font-weight="bold" fill="#fff" font-family="Liberation Sans">?</text><path d="M13 11 L13 18 L15 16 L17 19" stroke="#555" stroke-width=".6" fill="#fff"/></svg>
<div class="t" style="left:481px;width:200px;text-align:center;top:44.7px;font-size:5.75px;color:#1e1e1e;-webkit-text-stroke:.06px #1e1e1e">Lot Closure</div>
<div class="t" style="left:481px;width:200px;text-align:center;top:51.2px;font-size:5.75px;color:#1e1e1e;-webkit-text-stroke:.06px #1e1e1e">Program&#9662;</div>
<div class="a" style="left:601px;top:28px;width:1px;height:27px;background:#d0d3d8"></div>
<svg class="a" style="left:616px;top:26px" width="16" height="16" viewBox="0 0 16 16"><path d="M1 6 L8 1 L15 6Z" fill="#999"/><rect x="2" y="6" width="12" height="9" fill="#aaa"/><rect x="4" y="7" width="1.5" height="7" fill="#ddd"/><rect x="10.5" y="7" width="1.5" height="7" fill="#ddd"/><rect x="7" y="9" width="2" height="5" fill="#e8a040"/><rect x="1" y="14" width="14" height="2" fill="#888"/></svg>
<div class="t" style="left:524px;width:200px;text-align:center;top:44.7px;font-size:5.75px;color:#1e1e1e;-webkit-text-stroke:.06px #1e1e1e">Legal Description</div>
<div class="t" style="left:524px;width:200px;text-align:center;top:51.2px;font-size:5.75px;color:#1e1e1e;-webkit-text-stroke:.06px #1e1e1e">Writer</div>
<div class="a" style="left:647px;top:28px;width:1px;height:27px;background:#d0d3d8"></div>
<svg class="a" style="left:661px;top:25px" width="18" height="18" viewBox="0 0 18 18"><path d="M7 3 L11 1 L16 3 L12 5Z" fill="#3aa04a"/><path d="M7 3 V6 L12 8 V5Z" fill="#b88a3a"/><path d="M16 3 V6 L12 8V5Z" fill="#8a6a2a"/><rect x="2" y="10" width="12" height="7" fill="#666"/><path d="M5 11 V16 M9 11 V16 M5 13.5 H9" stroke="#fff" stroke-width="1"/></svg>
<div class="t" style="left:571px;width:200px;text-align:center;top:44.7px;font-size:5.75px;color:#1e1e1e;-webkit-text-stroke:.06px #1e1e1e">Create / Edit</div>
<div class="t" style="left:571px;width:200px;text-align:center;top:51.2px;font-size:5.75px;color:#1e1e1e;-webkit-text-stroke:.06px #1e1e1e">Lots&nbsp; Blocks&#9662;</div>
<svg class="a" style="left:713px;top:26px" width="14" height="17" viewBox="0 0 14 17"><path d="M1 7 L7 1 L13 7Z" fill="#333"/><rect x="2" y="7" width="10" height="9" fill="#9ad0f0"/><rect x="6" y="11" width="2" height="5" fill="#d03030"/></svg>
<div class="t" style="left:620px;width:200px;text-align:center;top:44.7px;font-size:5.75px;color:#1e1e1e;-webkit-text-stroke:.06px #1e1e1e">Draw a Multisided</div>
<div class="t" style="left:620px;width:200px;text-align:center;top:51.2px;font-size:5.75px;color:#1e1e1e;-webkit-text-stroke:.06px #1e1e1e">Building</div>
<svg class="a" style="left:756px;top:25px" width="18" height="18" viewBox="0 0 18 18"><path d="M1 12 L10 9 L16 12 L7 16Z" fill="#1f7a2f"/><path d="M1 10 L10 7 L16 10 L7 14Z" fill="#2a9a3a"/><path d="M1 8 L10 5 L16 8 L7 12Z" fill="#3ab04a"/><path d="M8 8 L12 6 L14 8" stroke="#f0e040" stroke-width="1" fill="none"/><path d="M10 10 L15 8" stroke="#3a9ad8" stroke-width="1.2"/><path d="M10 2 H16 M13 -1 L16 2 L13 5" stroke="#2ab070" stroke-width="1.4" fill="none"/></svg>
<div class="t" style="left:665px;width:200px;text-align:center;top:44.7px;font-size:5.75px;color:#1e1e1e;-webkit-text-stroke:.06px #1e1e1e">Shapefile</div>
<div class="t" style="left:665px;width:200px;text-align:center;top:51.2px;font-size:5.75px;color:#1e1e1e;-webkit-text-stroke:.06px #1e1e1e">Import</div>
<svg class="a" style="left:784px;top:25px" width="18" height="18" viewBox="0 0 18 18"><path d="M1 12 L10 9 L16 12 L7 16Z" fill="#1f7a2f"/><path d="M1 10 L10 7 L16 10 L7 14Z" fill="#2a9a3a"/><path d="M1 8 L10 5 L16 8 L7 12Z" fill="#3ab04a"/><path d="M8 8 L12 6 L14 8" stroke="#f0e040" stroke-width="1" fill="none"/><path d="M10 10 L15 8" stroke="#3a9ad8" stroke-width="1.2"/><circle cx="14" cy="3" r="2.4" fill="none" stroke="#333" stroke-width="1.4" stroke-dasharray="1 .7"/></svg>
<div class="t" style="left:692px;width:200px;text-align:center;top:44.7px;font-size:5.75px;color:#1e1e1e;-webkit-text-stroke:.06px #1e1e1e">Shapefile</div>
<div class="t" style="left:692px;width:200px;text-align:center;top:51.2px;font-size:5.75px;color:#1e1e1e;-webkit-text-stroke:.06px #1e1e1e">Modify</div>
<svg class="a" style="left:813px;top:25px" width="18" height="18" viewBox="0 0 18 18"><path d="M1 12 L10 9 L16 12 L7 16Z" fill="#1f7a2f"/><path d="M1 10 L10 7 L16 10 L7 14Z" fill="#2a9a3a"/><path d="M1 8 L10 5 L16 8 L7 12Z" fill="#3ab04a"/><path d="M8 8 L12 6 L14 8" stroke="#f0e040" stroke-width="1" fill="none"/><path d="M10 10 L15 8" stroke="#3a9ad8" stroke-width="1.2"/><circle cx="13" cy="3" r="2.2" fill="none" stroke="#333" stroke-width="1"/><path d="M14.5 4.5 L17 7" stroke="#333" stroke-width="1.2"/></svg>
<div class="t" style="left:722px;width:200px;text-align:center;top:44.7px;font-size:5.75px;color:#1e1e1e;-webkit-text-stroke:.06px #1e1e1e">Shapefile</div>
<div class="t" style="left:722px;width:200px;text-align:center;top:51.2px;font-size:5.75px;color:#1e1e1e;-webkit-text-stroke:.06px #1e1e1e">Attributes&#9662;</div>
<div class="a" style="left:0px;top:68px;width:980px;height:15px;background:linear-gradient(#dfe1e7,#d0d3da)"></div>
<div class="a" style="left:763px;top:68px;width:217px;height:15px;background:#575757"></div>
<div class="a" style="left:0px;top:82px;width:980px;height:1px;background:#b0b0b0"></div>
<svg class="a" style="left:2px;top:70px" width="5" height="12" viewBox="0 0 5 12"><g fill="#777"><rect x="1" y="1" width="1" height="1"/><rect x="1" y="3" width="1" height="1"/><rect x="1" y="5" width="1" height="1"/><rect x="1" y="7" width="1" height="1"/><rect x="1" y="9" width="1" height="1"/></g></svg>
<svg class="a" style="left:6px;top:70px" width="10" height="11" viewBox="0 0 10 11"><path d="M1 3 L5 1 L9 3 L5 5Z" fill="#336"/><rect x="2" y="4" width="6" height="6" fill="#fff" stroke="#999" stroke-width=".5"/><rect x="2" y="4" width="6" height="2" fill="#e44"/></svg>
<svg class="a" style="left:17px;top:70px" width="10" height="11" viewBox="0 0 10 11"><rect x="1" y="2" width="7" height="2" fill="#aaa"/><rect x="1" y="5" width="7" height="2" fill="#ccc"/><circle cx="6" cy="9" r="1.5" fill="#4a9ae8"/></svg>
<svg class="a" style="left:28px;top:70px" width="10" height="11" viewBox="0 0 10 11"><rect x="1" y="2" width="7" height="2" fill="#999"/><rect x="1" y="5" width="7" height="2" fill="#999"/><rect x="1" y="8" width="5" height="2" fill="#999"/></svg>
<div class="a" style="left:42px;top:71px;width:1px;height:10px;background:#999"></div>
<div class="a" style="left:46px;top:70px;width:98px;height:12px;background:#fff;border:1px solid #c8c8c8"></div>
<svg class="a" style="left:47px;top:70px" width="9" height="12" viewBox="0 0 9 12"><ellipse cx="4.5" cy="5" rx="3" ry="3.5" fill="#ffe34a" stroke="#c0a000" stroke-width=".4"/><rect x="3.3" y="8.5" width="2.4" height="2" fill="#999"/></svg>
<svg class="a" style="left:56px;top:71px" width="9" height="10" viewBox="0 0 9 10"><circle cx="4.5" cy="5" r="3.4" fill="#e6d200" stroke="#9a8a00" stroke-width=".6" stroke-dasharray="1.2 .6"/><circle cx="4.5" cy="5" r="1.4" fill="#fff8b0"/></svg>
<svg class="a" style="left:65px;top:71px" width="8" height="10" viewBox="0 0 8 10"><rect x="1" y="1" width="6" height="8" fill="#eee" stroke="#ccc" stroke-width=".5"/></svg>
<svg class="a" style="left:73px;top:70px" width="9" height="12" viewBox="0 0 9 12"><rect x="1" y="6" width="6" height="5" fill="#e8b84a"/><path d="M3 6 V4 A2 2 0 0 1 7 4" stroke="#888" stroke-width="1" fill="none"/></svg>
<div class="a" style="left:83px;top:72px;width:7px;height:8px;background:#1fc7e6;border:1px solid #1a4a66"></div>
<div class="t" style="left:92px;top:74px;font-size:5.6px;color:#222;letter-spacing:-0.1px">DESCRIPTION</div>
<div class="a" style="left:136px;top:71px;width:8px;height:10px;background:#cfd1d4"></div>
<div class="t" style="left:138px;top:74.5px;font-size:5px;color:#222;">&#9662;</div>
<div class="a" style="left:151px;top:70px;width:102px;height:12px;background:#fff;border:1px solid #c8c8c8"></div>
<div class="a" style="left:155px;top:72.5px;width:45px;height:7px;background:#00d8f0;border:1px solid #0a3a50"></div>
<div class="t" style="left:202px;top:74px;font-size:5.6px;color:#222;">BYLAYER</div>
<div class="a" style="left:244px;top:71px;width:8px;height:10px;background:#cfd1d4"></div>
<div class="t" style="left:245.5px;top:74px;font-size:5px;color:#222;">&#9662;</div>
<div class="a" style="left:258px;top:70px;width:100px;height:12px;background:#fff;border:1px solid #c8c8c8"></div>
<div class="a" style="left:262px;top:76px;width:45px;height:1px;background:#333"></div>
<div class="t" style="left:308px;top:74px;font-size:5.6px;color:#222;">BYLAYER</div>
<div class="a" style="left:350px;top:71px;width:8px;height:10px;background:#cfd1d4"></div>
<div class="t" style="left:351px;top:74px;font-size:5px;color:#222;">&#9662;</div>
<div class="a" style="left:362px;top:71px;width:1px;height:10px;background:#aaa"></div>
<div class="a" style="left:366px;top:70px;width:99px;height:12px;background:#fff;border:1px solid #c8c8c8"></div>
<div class="a" style="left:370px;top:76px;width:43px;height:1px;background:#333"></div>
<div class="t" style="left:414px;top:74px;font-size:5.6px;color:#222;">BYLAYER</div>
<div class="a" style="left:457px;top:71px;width:8px;height:10px;background:#cfd1d4"></div>
<div class="t" style="left:458px;top:74px;font-size:5px;color:#222;">&#9662;</div>
<div class="a" style="left:470px;top:70px;width:55px;height:12px;background:#e9e9e9;border:1px solid #c8c8c8"></div>
<div class="a" style="left:471px;top:71px;width:42px;height:10px;background:#d2d2d2"></div>
<div class="t" style="left:472px;top:74px;font-size:5.6px;color:#9a9a9a;">BYCOLOR</div>
<div class="t" style="left:516px;top:74px;font-size:5px;color:#222;">&#9662;</div>
<div class="a" style="left:528px;top:68px;width:235px;height:14.5px;background:linear-gradient(#e6e8ed,#d2d5dc);border-radius:2px"></div>
<svg class="a" style="left:531px;top:69px" width="3" height="13" viewBox="0 0 3 13"><g fill="#777"><rect x="1" y="1" width="1" height="1"/><rect x="1" y="4" width="1" height="1"/><rect x="1" y="7" width="1" height="1"/><rect x="1" y="10" width="1" height="1"/></g></svg>
<svg class="a" style="left:536px;top:70px" width="10" height="10" viewBox="0 0 10 10"><path d="M1 5 H9" stroke="#555" stroke-width=".8" stroke-dasharray="1.5 1"/><rect x="6" y="4" width="2" height="2" fill="#e33"/></svg>
<svg class="a" style="left:548px;top:70px" width="10" height="10" viewBox="0 0 10 10"><path d="M2 9 V3 H9" stroke="#555" stroke-width="1" fill="none"/><rect x="7" y="2" width="2" height="2" fill="#e33"/></svg>
<svg class="a" style="left:559px;top:70px" width="10" height="10" viewBox="0 0 10 10"><path d="M2 1 V9 M8 1 V9 M2 5 H8" stroke="#555" stroke-width="1"/><rect x="4" y="4" width="2" height="2" fill="#e33"/></svg>
<svg class="a" style="left:571px;top:70px" width="10" height="10" viewBox="0 0 10 10"><circle cx="5" cy="5" r="4" fill="none" stroke="#333" stroke-width="1"/><rect x="8" y="6" width="2" height="2" fill="#e33"/></svg>
<div class="a" style="left:581px;top:69px;width:12px;height:12px;background:linear-gradient(#fde6a8,#f8c868);border:1px solid #e5b060"></div>
<svg class="a" style="left:582px;top:70px" width="10" height="10" viewBox="0 0 10 10"><path d="M1 1 L9 9" stroke="#333" stroke-width="1.2"/></svg>
<svg class="a" style="left:594px;top:70px" width="10" height="10" viewBox="0 0 10 10"><path d="M1 2 L5 6 L9 2 M1 9 L5 6 L9 9" stroke="#333" stroke-width="1" fill="none"/><rect x="4" y="5" width="2" height="2" fill="#e33"/></svg>
<div class="a" style="left:604px;top:69px;width:12px;height:12px;background:linear-gradient(#fde6a8,#f8c868);border:1px solid #e5b060"></div>
<svg class="a" style="left:605px;top:70px" width="10" height="10" viewBox="0 0 10 10"><circle cx="5" cy="5" r="4" fill="none" stroke="#e33" stroke-width="1"/><circle cx="5" cy="5" r="1.5" fill="#e33"/></svg>
<svg class="a" style="left:617px;top:70px" width="10" height="10" viewBox="0 0 10 10"><path d="M5 1 V8 M1 8 H9" stroke="#333" stroke-width="1"/></svg>
<svg class="a" style="left:629px;top:70px" width="10" height="10" viewBox="0 0 10 10"><circle cx="5" cy="6" r="3" fill="none" stroke="#333" stroke-width="1"/><path d="M3 1 L5 3" stroke="#e33"/></svg>
<svg class="a" style="left:640px;top:70px" width="10" height="10" viewBox="0 0 10 10"><circle cx="5" cy="5" r="4" fill="none" stroke="#e33" stroke-width="1"/></svg>
<svg class="a" style="left:652px;top:70px" width="10" height="10" viewBox="0 0 10 10"><rect x="1" y="2" width="6" height="5" fill="none" stroke="#333" stroke-width=".8"/><rect x="4" y="4" width="5" height="4" fill="#bbb" stroke="#333" stroke-width=".6"/></svg>
<div class="a" style="left:663px;top:69px;width:12px;height:12px;background:linear-gradient(#fde6a8,#f8c868);border:1px solid #e5b060"></div>
<svg class="a" style="left:664px;top:70px" width="10" height="10" viewBox="0 0 10 10"><rect x="4" y="4" width="2" height="2" fill="#e33"/></svg>
<div class="a" style="left:675px;top:69px;width:12px;height:12px;background:linear-gradient(#fde6a8,#f8c868);border:1px solid #e5b060"></div>
<svg class="a" style="left:676px;top:70px" width="10" height="10" viewBox="0 0 10 10"><path d="M1 1 L9 9" stroke="#333" stroke-width="1"/><rect x="4" y="4" width="2" height="2" fill="#e33"/></svg>
<svg class="a" style="left:687px;top:70px" width="10" height="10" viewBox="0 0 10 10"><path d="M1 7 L6 2 M3 9 L8 4" stroke="#777" stroke-width="1"/><rect x="5" y="5" width="2" height="2" fill="#e33"/></svg>
<div class="a" style="left:703px;top:69px;width:12px;height:12px;background:linear-gradient(#fde6a8,#f8c868);border:1px solid #e5b060"></div>
<svg class="a" style="left:704px;top:70px" width="10" height="10" viewBox="0 0 10 10"><path d="M1 2 L9 8 M1 8 L9 2" stroke="#333" stroke-width="1.2"/><rect x="4" y="4" width="2" height="2" fill="#e33"/></svg>
<svg class="a" style="left:716px;top:70px" width="10" height="10" viewBox="0 0 10 10"><path d="M1 2 L9 5 L1 8" stroke="#333" stroke-width="1" fill="none"/><rect x="7" y="4" width="2" height="2" fill="#e33"/></svg>
<svg class="a" style="left:733px;top:70px" width="10" height="10" viewBox="0 0 10 10"><circle cx="6" cy="2" r="1.2" fill="#333"/><path d="M6 3 L4 6 L1 6 M4 6 L6 9 M5 4 L8 5 M4 6 L3 9" stroke="#333" stroke-width="1" fill="none"/></svg>
<svg class="a" style="left:744px;top:70px" width="10" height="10" viewBox="0 0 10 10"><path d="M1.5 1.5 L8.5 8.5 M8.5 1.5 L1.5 8.5" stroke="#e82a1a" stroke-width="2.2"/></svg>
<div class="a" style="left:699px;top:70px;width:1px;height:10px;background:#aaa"></div>
<div class="a" style="left:728px;top:70px;width:1px;height:10px;background:#aaa"></div>
<div class="a" style="left:0px;top:82.5px;width:980px;height:11px;background:linear-gradient(#aeb2bc,#c8ccd4 60%,#d4d7de)"></div>
<svg class="a" style="left:0px;top:83px" width="200" height="11" viewBox="0 0 200 11"><path d="M4 11 L10 2 H44 L44 11Z" fill="#6e6e6e"/><path d="M44 11 L50 2 H93 L88 11Z" fill="#6e6e6e"/><path d="M87 11 L94 1.5 H156 V11Z" fill="#fbfbfb"/></svg>
<div class="t" style="left:14px;top:85.5px;font-size:5.8px;color:#dedede;">Start Page</div>
<div class="t" style="left:50px;top:85.5px;font-size:5.8px;color:#dedede;">Drawing1.dwg</div>
<div class="t" style="left:98px;top:85.5px;font-size:5.8px;color:#111;">Sample_Arcs.dwg</div>
<div class="t" style="left:149px;top:85px;font-size:6.8px;color:#222;">&#10005;</div>
<div class="t" style="left:971px;top:86px;font-size:6px;color:#111;">&#9660;</div>
<div class="a" style="left:14px;top:93.3px;width:966px;height:1.5px;background:#b0842a"></div>
<div class="a" style="left:0px;top:94px;width:14px;height:437px;background:linear-gradient(90deg,#5a5a5a 0,#5a5a5a 1px,#a8a8a8 1px,#9c9c9c 11px,#7a7a7a 13px,#666 14px)"></div>
<div class="a" style="left:2px;top:95px;width:10px;height:4px;background:#b8b8b8"></div>
<div class="t" style="left:3px;top:296px;font-size:7px;color:#f4f4f4;transform:rotate(-90deg);transform-origin:0 0;top:330px;left:3px">Properties</div><svg class="a" style="left:0;top:0" width="980" height="596" viewBox="0 0 980 596">
<defs><clipPath id="dc"><rect x="14" y="94" width="966" height="425"/></clipPath></defs>
<g clip-path="url(#dc)" fill="none" stroke-linecap="butt">
<rect x="14" y="94" width="966" height="425" fill="#212836" stroke="none"/>
<path d="M284 94 V519 M14 150 L45 94" stroke="#c8912a" stroke-width=".9"/>
<circle cx="284" cy="96" r="2" stroke="#c8912a" stroke-width=".8"/>
<path d="M418.5 105.5 A182.5 182.5 0 1 0 590.0 350.4 Q603 313 630 311 H729 L755 336 V519" stroke="#8d876a" stroke-width="1" stroke-dasharray="10 6"/>
<path d="M418.5 106.0 H730 L741 94" stroke="#8d876a" stroke-width="1" stroke-dasharray="12 5.5"/>
<path d="M960 196 V519" stroke="#8d876a" stroke-width="1" stroke-dasharray="14 8"/>
<path d="M418.5 139.5 A148.5 148.5 0 1 0 561.8 326.9 A66 66 0 0 1 627 277 H742 L789.5 322 V519" stroke="#23a52d" stroke-width="1.1"/>
<path d="M418.5 139.5 H743 L790 94" stroke="#23a52d" stroke-width="1.1"/>
<path d="M14 292.5 L270 290" stroke="#23a52d" stroke-width="1.2"/>
<path d="M515 94 V140 M516 400 V519 M299 94 L341 161 M340.7 414.3 L280 519 M927 196 V519 M927 368 H980" stroke="#23a52d" stroke-width="1.1"/>
<path d="M790 94 V322 M418.5 208 V288" stroke="#19b9dc" stroke-width="1.1"/>
<path d="M418 208.5 H502 M547 208.5 H593 M615 208.5 H662 M682 208.5 H685 M707 208.5 H750 M775 208.5 H857" stroke="#7088a8" stroke-width="1.1"/>
<path d="M857.5 208.5 V300 M857.5 345 V391 M857.5 415 V461 M857.5 505 V519" stroke="#7088a8" stroke-width="1.1"/>
<path d="M419.5 140 V208" stroke="#c9ccd2" stroke-width="1" stroke-dasharray="18 10 24 100"/>
<path d="M270 290 L418.5 288" stroke="#9aa0a8" stroke-width="1.3" stroke-dasharray="23 11"/>
<path d="M341 161 L418.5 288" stroke="#c9ccd2" stroke-width="1" stroke-dasharray="20 12"/>
<path d="M340.7 414.3 L418.5 288" stroke="#c9ccd2" stroke-width="1" stroke-dasharray="20 12"/>
<path d="M418.5 288 L516 400" stroke="#c9ccd2" stroke-width="1" stroke-dasharray="20 12"/>
<path d="M418.5 288 L576 331" stroke="#c9ccd2" stroke-width="1" stroke-dasharray="20 12"/>
<path d="M337 157 L345 165 M345 157 L337 165" stroke="#d8dade" stroke-width=".9"/>
<text x="343" y="160" font-size="4.5" fill="#2ac8f0" stroke="none" font-family="Liberation Sans" font-weight="bold">#50</text>
<path d="M415.5 136 L423.5 144 M423.5 136 L415.5 144" stroke="#d8dade" stroke-width=".9"/>
<text x="421.5" y="139" font-size="4.5" fill="#2ac8f0" stroke="none" font-family="Liberation Sans" font-weight="bold">#31</text>
<path d="M511 136 L519 144 M519 136 L511 144" stroke="#d8dade" stroke-width=".9"/>
<text x="517" y="139" font-size="4.5" fill="#2ac8f0" stroke="none" font-family="Liberation Sans" font-weight="bold">#30</text>
<path d="M739 136 L747 144 M747 136 L739 144" stroke="#d8dade" stroke-width=".9"/>
<text x="745" y="139" font-size="4.5" fill="#2ac8f0" stroke="none" font-family="Liberation Sans" font-weight="bold">#64</text>
<path d="M266 286 L274 294 M274 286 L266 294" stroke="#d8dade" stroke-width=".9"/>
<text x="272" y="289" font-size="4.5" fill="#2ac8f0" stroke="none" font-family="Liberation Sans" font-weight="bold">#76</text>
<path d="M414.5 284 L422.5 292 M422.5 284 L414.5 292" stroke="#d8dade" stroke-width=".9"/>
<text x="420.5" y="287" font-size="4.5" fill="#2ac8f0" stroke="none" font-family="Liberation Sans" font-weight="bold">#30</text>
<path d="M336.7 410.3 L344.7 418.3 M344.7 410.3 L336.7 418.3" stroke="#d8dade" stroke-width=".9"/>
<text x="342.7" y="413.3" font-size="4.5" fill="#2ac8f0" stroke="none" font-family="Liberation Sans" font-weight="bold">#49</text>
<path d="M512 396 L520 404 M520 396 L512 404" stroke="#d8dade" stroke-width=".9"/>
<text x="518" y="399" font-size="4.5" fill="#2ac8f0" stroke="none" font-family="Liberation Sans" font-weight="bold">#31</text>
<path d="M558 323 L566 331 M566 323 L558 331" stroke="#d8dade" stroke-width=".9"/>
<text x="564" y="326" font-size="4.5" fill="#2ac8f0" stroke="none" font-family="Liberation Sans" font-weight="bold">#77</text>
<path d="M623 273 L631 281 M631 273 L623 281" stroke="#d8dade" stroke-width=".9"/>
<text x="629" y="276" font-size="4.5" fill="#2ac8f0" stroke="none" font-family="Liberation Sans" font-weight="bold">#45</text>
<path d="M738 273 L746 281 M746 273 L738 281" stroke="#d8dade" stroke-width=".9"/>
<text x="744" y="276" font-size="4.5" fill="#2ac8f0" stroke="none" font-family="Liberation Sans" font-weight="bold">#63</text>
<path d="M785.5 318 L793.5 326 M793.5 318 L785.5 326" stroke="#d8dade" stroke-width=".9"/>
<text x="791.5" y="321" font-size="4.5" fill="#2ac8f0" stroke="none" font-family="Liberation Sans" font-weight="bold">#13</text>
<path d="M853.5 204.5 L861.5 212.5 M861.5 204.5 L853.5 212.5" stroke="#d8dade" stroke-width=".9"/>
<text x="859.5" y="207.5" font-size="4.5" fill="#2ac8f0" stroke="none" font-family="Liberation Sans" font-weight="bold">#81</text>
<path d="M923 364 L931 372 M931 364 L923 372" stroke="#d8dade" stroke-width=".9"/>
<text x="929" y="367" font-size="4.5" fill="#2ac8f0" stroke="none" font-family="Liberation Sans" font-weight="bold">#54</text>
<path d="M623 341 L631 349 M631 341 L623 349" stroke="#d8dade" stroke-width=".9"/>
<text x="629" y="344" font-size="4.5" fill="#2ac8f0" stroke="none" font-family="Liberation Sans" font-weight="bold">#45</text>
<path d="M414.5 204 L422.5 212 M422.5 204 L414.5 212" stroke="#d8dade" stroke-width=".9"/>
<text x="420.5" y="207" font-size="4.5" fill="#2ac8f0" stroke="none" font-family="Liberation Sans" font-weight="bold">#30</text>
<path d="M419.5 140 V158 M627 277 V300 M627 330 V345 M617 343 L627 345.5" stroke="#c9ccd2" stroke-width="1"/>
</g></svg>
<div class="t" style="left:411px;top:134.97px;width:120px;text-align:center;font-size:4.6px;color:#f03a30;transform:rotate(0deg);font-weight:bold;">N88°56'41"E</div>
<div class="t" style="left:408px;top:140.97px;width:120px;text-align:center;font-size:4.6px;color:#2ccc2c;transform:rotate(0deg);">41.30'</div>
<div class="t" style="left:570px;top:134.97px;width:120px;text-align:center;font-size:4.6px;color:#f03a30;transform:rotate(0deg);font-weight:bold;">S88°56'41"E</div>
<div class="t" style="left:570px;top:140.97px;width:120px;text-align:center;font-size:4.6px;color:#2ccc2c;transform:rotate(0deg);">153.93'</div>
<div class="t" style="left:624px;top:272.97px;width:120px;text-align:center;font-size:4.6px;color:#f03a30;transform:rotate(0deg);font-weight:bold;">S88°56'41"E</div>
<div class="t" style="left:624px;top:278.47px;width:120px;text-align:center;font-size:4.6px;color:#2ccc2c;transform:rotate(0deg);">81.80'</div>
<div class="t" style="left:42px;top:291.97px;width:120px;text-align:center;font-size:4.6px;color:#2ccc2c;transform:rotate(0deg);">146.30'</div>
<div class="t" style="left:284px;top:284.67px;width:120px;text-align:center;font-size:4.6px;color:#f03a30;transform:rotate(-1deg);font-weight:bold;">S88°27'00"W</div>
<div class="t" style="left:704px;top:113.47px;width:120px;text-align:center;font-size:4.6px;color:#f03a30;transform:rotate(-43deg);font-weight:bold;">N43°56'19"E</div>
<div class="t" style="left:709px;top:117.47px;width:120px;text-align:center;font-size:4.6px;color:#2ccc2c;transform:rotate(-43deg);">36.38'</div>
<div class="t" style="left:708.5px;top:294.97px;width:120px;text-align:center;font-size:4.6px;color:#f03a30;transform:rotate(43deg);font-weight:bold;">S46°03'41"E</div>
<div class="t" style="left:713px;top:291.47px;width:120px;text-align:center;font-size:4.6px;color:#2ccc2c;transform:rotate(43deg);">36.38'</div>
<div class="t" style="left:726px;top:206.47px;width:120px;text-align:center;font-size:4.6px;color:#f03a30;transform:rotate(-90deg);font-weight:bold;">S1°03'19"W</div>
<div class="t" style="left:733px;top:206.47px;width:120px;text-align:center;font-size:4.6px;color:#2ccc2c;transform:rotate(-90deg);">130.00'</div>
<div class="t" style="left:725px;top:455.47px;width:120px;text-align:center;font-size:4.6px;color:#f03a30;transform:rotate(-90deg);font-weight:bold;">S1°03'19"W</div>
<div class="t" style="left:733px;top:455.47px;width:120px;text-align:center;font-size:4.6px;color:#2ccc2c;transform:rotate(-90deg);">130.00'</div>
<div class="t" style="left:869px;top:253.47px;width:120px;text-align:center;font-size:4.6px;color:#2ccc2c;transform:rotate(-90deg);">130.00'</div>
<div class="t" style="left:869px;top:475.47px;width:120px;text-align:center;font-size:4.6px;color:#2ccc2c;transform:rotate(-90deg);">93.70'</div>
<div class="t" style="left:457.5px;top:495.47px;width:120px;text-align:center;font-size:4.6px;color:#2ccc2c;transform:rotate(-90deg);">93.70'</div>
<div class="t" style="left:356px;top:210.36px;width:120px;text-align:center;font-size:4.8px;color:#f03a30;transform:rotate(-90deg);font-weight:bold;"><b>S1°03'W</b></div>
<div class="t" style="left:565px;top:308.47px;width:120px;text-align:center;font-size:4.6px;color:#f03a30;transform:rotate(-90deg);font-weight:bold;">S1°03'19"W</div>
<div class="t" style="left:322px;top:221.47px;width:120px;text-align:center;font-size:4.6px;color:#f03a30;transform:rotate(58deg);font-weight:bold;"><span style="border-bottom:1px solid rgba(225,225,225,.85);font-weight:bold">N58°57'W</span></div>
<div class="t" style="left:317px;top:348.47px;width:120px;text-align:center;font-size:4.6px;color:#f03a30;transform:rotate(-60deg);font-weight:bold;"><span style="border-bottom:1px solid rgba(225,225,225,.85);font-weight:bold">S58°57'E</span></div>
<div class="t" style="left:430px;top:302.47px;width:120px;text-align:center;font-size:4.6px;color:#f03a30;transform:rotate(18deg);font-weight:bold;"><span style="border-bottom:1px solid rgba(225,225,225,.85);font-weight:bold">S77°44'17"E</span></div>
<div class="t" style="left:409px;top:340.47px;width:120px;text-align:center;font-size:4.6px;color:#f03a30;transform:rotate(60deg);font-weight:bold;"><span style="border-bottom:1px solid rgba(225,225,225,.85);font-weight:bold">S41°09'E</span></div>
<div class="t" style="left:535px;top:331.47px;width:120px;text-align:center;font-size:4.6px;color:#f03a30;transform:rotate(18deg);font-weight:bold;"><span style="border-bottom:1px solid rgba(225,225,225,.85);font-weight:bold">N77°46'19"E</span></div>
<div class="t" style="left:313px;top:122.59px;width:120px;text-align:center;font-size:6.2px;color:#2ccc2c;transform:rotate(-17deg);letter-spacing:.35px">Δ=57°41'45"W</div>
<div class="t" style="left:317px;top:132.09px;width:120px;text-align:center;font-size:6.2px;color:#2ccc2c;transform:rotate(-17deg);letter-spacing:.35px">Δ=31°17'7"r=65.00'a=36.14'</div>
<div class="t" style="left:227px;top:210.59px;width:120px;text-align:center;font-size:6.2px;color:#2ccc2c;transform:rotate(-61deg);letter-spacing:.35px">Δ=34°58'37"W</div>
<div class="t" style="left:236px;top:215.59px;width:120px;text-align:center;font-size:6.2px;color:#2ccc2c;transform:rotate(-61deg);letter-spacing:.35px">Δ=31°03'37"r=65.00'a=35.33'</div>
<div class="t" style="left:235px;top:367.92px;width:120px;text-align:center;font-size:5.6px;color:#2ccc2c;transform:rotate(51deg);letter-spacing:.3px">Δ=34°53'00"r=65.00'a=37.38'</div>
<div class="t" style="left:242px;top:362.92px;width:120px;text-align:center;font-size:5.6px;color:#2ccc2c;transform:rotate(51deg);letter-spacing:.3px">S34°33'00"W</div>
<div class="t" style="left:370px;top:423.92px;width:120px;text-align:center;font-size:5.6px;color:#2ccc2c;transform:rotate(-7deg);letter-spacing:.3px">Δ=72°34'00"r=65.00'a=82.48'</div>
<div class="t" style="left:370px;top:432.42px;width:120px;text-align:center;font-size:5.6px;color:#2ccc2c;transform:rotate(-7deg);letter-spacing:.3px">c=83.39'S85°09'30"E</div>
<div class="t" style="left:482px;top:377.92px;width:120px;text-align:center;font-size:5.6px;color:#2ccc2c;transform:rotate(-55deg);letter-spacing:.3px">Δ=33°44'45"r=65.00'a=38.27'</div>
<div class="t" style="left:491px;top:383.92px;width:120px;text-align:center;font-size:5.6px;color:#2ccc2c;transform:rotate(-55deg);letter-spacing:.3px">S6°42'07"E</div>
<div class="t" style="left:534px;top:277.92px;width:120px;text-align:center;font-size:5.6px;color:#2ccc2c;transform:rotate(-24deg);letter-spacing:.3px">Δ=92°36'0"r=65.00'a=34.14'</div>
<div class="t" style="left:528px;top:285.92px;width:120px;text-align:center;font-size:5.6px;color:#2ccc2c;transform:rotate(-34deg);letter-spacing:.3px">S44°44'45"</div>
<div class="a" style="left:418px;top:225.5px;width:144px;height:156px;background:rgba(246,246,250,.3);border-left:1px solid rgba(230,230,230,.35)"></div>
<div class="a" style="left:418px;top:210.5px;width:144px;height:15px;background:rgba(238,192,58,.58)"></div>
<div class="t" style="left:423px;top:215px;font-size:6.5px;color:rgba(40,35,20,.5);transform:scaleX(.87);transform-origin:0 0;">Starting Lot Closure Information</div>
<div class="t" style="left:526px;top:214px;font-size:7px;color:rgba(40,35,20,.6);transform:scaleX(.87);transform-origin:0 0;">?</div>
<div class="t" style="left:547px;top:214.5px;font-size:7px;color:rgba(40,35,20,.55);transform:scaleX(.87);transform-origin:0 0;">&#10005;</div>
<div class="t" style="left:428px;top:232px;font-size:6px;color:rgba(20,20,20,.62);transform:scaleX(.87);transform-origin:0 0;">Enter name of lot to work on:</div>
<div class="t" style="left:430px;top:241.5px;font-size:6px;color:rgba(20,20,20,.62);transform:scaleX(.87);transform-origin:0 0;">Name</div>
<div class="a" style="left:429px;top:248px;width:66px;height:12px;background:rgba(240,240,240,.08);border:1px solid rgba(110,150,200,.45)"></div>
<div class="t" style="left:498px;top:242.5px;font-size:6px;color:rgba(20,20,20,.62);transform:scaleX(.87);transform-origin:0 0;">Pick from existing lots:</div>
<div class="a" style="left:498px;top:249px;width:53px;height:10px;background:rgba(200,200,200,.1);border:1px solid rgba(120,120,120,.25)"></div>
<div class="t" style="left:544px;top:251px;font-size:6px;color:rgba(20,20,20,.62);transform:scaleX(.87);transform-origin:0 0;">&#8964;</div>
<div class="a" style="left:456px;top:276px;width:7px;height:7px;border:1px solid rgba(30,30,30,.45)"></div>
<div class="t" style="left:465px;top:276px;font-size:6px;color:rgba(20,20,20,.62);transform:scaleX(.87);transform-origin:0 0;">Store points in database</div>
<div class="t" style="left:460px;top:290px;font-size:6px;color:rgba(20,20,20,.62);transform:scaleX(.87);transform-origin:0 0;">Starting Point Id</div>
<div class="a" style="left:502px;top:287px;width:34px;height:12px;border:1px solid rgba(120,120,120,.2)"></div>
<div class="t" style="left:504px;top:290px;font-size:6px;color:rgba(60,60,60,.35);transform:scaleX(.87);transform-origin:0 0;">139</div>
<div class="t" style="left:428px;top:307.5px;font-size:6px;color:rgba(20,20,20,.62);transform:scaleX(.87);transform-origin:0 0;">Starting location</div>
<div class="t" style="left:432px;top:317.5px;font-size:6px;color:rgba(20,20,20,.62);transform:scaleX(.87);transform-origin:0 0;">Starting Northing</div>
<div class="a" style="left:475px;top:314px;width:36px;height:12px;background:rgba(120,180,190,.16);border:1px solid rgba(60,60,60,.3)"></div>
<div class="t" style="left:434px;top:332px;font-size:6px;color:rgba(20,20,20,.62);transform:scaleX(.87);transform-origin:0 0;">Starting Easting</div>
<div class="a" style="left:475px;top:329px;width:36px;height:12px;background:rgba(120,180,190,.16);border:1px solid rgba(60,60,60,.3)"></div>
<div class="a" style="left:514px;top:319px;width:38px;height:17px;background:rgba(200,200,200,.07);border:1px solid rgba(60,60,60,.15)"></div>
<div class="t" style="left:518px;top:320.5px;font-size:5.8px;color:rgba(20,20,20,.62);transform:scaleX(.87);transform-origin:0 0;">Pick drawing</div>
<div class="t" style="left:516px;top:327px;font-size:5.8px;color:rgba(20,20,20,.62);transform:scaleX(.87);transform-origin:0 0;">to get location</div>
<div class="a" style="left:462px;top:352px;width:7px;height:7px;border:1px solid rgba(30,30,30,.45)"></div>
<div class="t" style="left:470px;top:352px;font-size:6px;color:rgba(20,20,20,.62);transform:scaleX(.87);transform-origin:0 0;">Draw lines/curves</div>
<div class="a" style="left:436px;top:365.5px;width:33px;height:11px;background:rgba(200,200,200,.06);border:1px solid rgba(60,60,60,.18)"></div>
<div class="t" style="left:436px;width:33px;text-align:center;top:368px;font-size:6px;color:rgba(20,20,20,.62)">OK</div>
<div class="a" style="left:473px;top:365.5px;width:33px;height:11px;background:rgba(200,200,200,.06);border:1px solid rgba(60,60,60,.18)"></div>
<div class="t" style="left:473px;width:33px;text-align:center;top:368px;font-size:6px;color:rgba(20,20,20,.62)">Cancel</div>
<div class="a" style="left:510px;top:365.5px;width:33px;height:11px;background:rgba(200,200,200,.06);border:1px solid rgba(60,60,60,.18)"></div>
<div class="t" style="left:510px;width:33px;text-align:center;top:368px;font-size:6px;color:rgba(20,20,20,.62)">Help</div><div class="a" style="left:14px;top:380px;width:966px;height:139px;background:linear-gradient(rgba(0,0,0,0),rgba(0,0,0,.17))"></div>
<svg class="a" style="left:20px;top:430px" width="90" height="80" viewBox="0 0 90 80"><path d="M13 70 V28" stroke="#c8a030" stroke-width="1.1" fill="none"/><path d="M9 39 L13 25 L17 39Z" fill="none" stroke="#c8a030" stroke-width="1"/><path d="M13 70 H56" stroke="#c8a030" stroke-width="1.1"/><path d="M46 66 L61 70 L46 74Z" fill="none" stroke="#c8a030" stroke-width="1"/><rect x="9" y="66" width="8" height="8" fill="none" stroke="#3a3a3a" stroke-width=".8"/></svg>
<div class="t" style="left:29px;top:437px;font-size:9px;color:#9aa0a8;">Y</div>
<div class="t" style="left:89px;top:497px;font-size:9px;color:#9aa0a8;">X</div>
<div class="a" style="left:0px;top:519px;width:980px;height:10.5px;background:linear-gradient(#c4c4c4,#bababa)"></div>
<div class="a" style="left:0px;top:519px;width:14px;height:12px;background:linear-gradient(90deg,#5a5a5a 0,#5a5a5a 1px,#a8a8a8 1px,#9c9c9c 11px,#7a7a7a 13px,#666 14px)"></div>
<div class="a" style="left:15.0px;top:520px;width:7px;height:8px;background:#dadada;border:1px solid #a8a8a8"></div>
<div class="a" style="left:22.7px;top:520px;width:7px;height:8px;background:#dadada;border:1px solid #a8a8a8"></div>
<div class="a" style="left:30.4px;top:520px;width:7px;height:8px;background:#dadada;border:1px solid #a8a8a8"></div>
<div class="a" style="left:38.1px;top:520px;width:7px;height:8px;background:#dadada;border:1px solid #a8a8a8"></div>
<svg class="a" style="left:15px;top:520px" width="32" height="8" viewBox="0 0 32 8"><g fill="#222"><rect x="2" y="2" width="1" height="4"/><path d="M6 2 L3.5 4 L6 6Z"/><path d="M12.5 2 L10 4 L12.5 6Z"/><path d="M17.5 2 L20 4 L17.5 6Z"/><path d="M25 2 L27.5 4 L25 6Z"/><rect x="28" y="2" width="1" height="4"/></g></svg>
<svg class="a" style="left:46px;top:518px" width="60" height="11" viewBox="0 0 60 11"><path d="M1 1 L6 10 H26 L30 1" fill="#e8e8e8" stroke="#555" stroke-width=".8"/><path d="M30 10 L33 1 H57 L52 10" fill="none" stroke="#666" stroke-width=".8"/></svg>
<div class="t" style="left:53px;top:520.5px;font-size:6.3px;color:#111;"><b>Model</b></div>
<div class="t" style="left:79px;top:520.5px;font-size:6.3px;color:#444;">Layout1</div>
<div class="a" style="left:0px;top:529px;width:980px;height:2.5px;background:linear-gradient(#5a5a5a,#3a3a3a)"></div>
<div class="a" style="left:0px;top:531px;width:980px;height:55px;background:linear-gradient(#bfbfbf,#c4c4c4 50%,#c0c0c0)"></div>
<div class="a" style="left:0px;top:531px;width:11px;height:55px;background:linear-gradient(90deg,#9a9a9a,#b4b4b4 60%,#8a8a8a)"></div>
<div class="t" style="left:2px;top:533.5px;font-size:6.5px;color:#333;">&#10005;</div>
<div class="t" style="left:2.5px;top:544.5px;font-size:5.5px;color:#222;">&#9660;</div>
<div class="t" style="left:11.5px;top:533.8px;font-size:6.6px;color:#333;font-family:'Liberation Mono',monospace;">Command:</div>
<div class="t" style="left:11.5px;top:540.8px;font-size:6.6px;color:#333;font-family:'Liberation Mono',monospace;">Cancel</div>
<div class="t" style="left:11.5px;top:547.8px;font-size:6.6px;color:#333;font-family:'Liberation Mono',monospace;">Command:</div>
<div class="t" style="left:11.5px;top:554.8px;font-size:6.6px;color:#333;font-family:'Liberation Mono',monospace;">Cancel</div>
<div class="t" style="left:11.5px;top:561.8px;font-size:6.6px;color:#333;font-family:'Liberation Mono',monospace;">Command: REA</div>
<div class="a" style="left:11px;top:565px;width:961px;height:9px;background:linear-gradient(#b6b6b6,#adadad)"></div>
<div class="a" style="left:11px;top:574px;width:961px;height:1px;background:#8e8e8e"></div>
<div class="a" style="left:11px;top:575px;width:961px;height:11px;background:linear-gradient(#9c9c9c,#868686)"></div>
<div class="t" style="left:12px;top:576.5px;font-size:6.6px;color:#2e2e2e;font-family:'Liberation Mono',monospace;">Command: _msnew_lot_closure</div>
<div class="a" style="left:972px;top:531px;width:8px;height:44px;background:#d6d6d6;border-left:1px solid #b8b8b8"></div>
<div class="t" style="left:973px;top:533px;font-size:6px;color:#555;">&#708;</div>
<div class="t" style="left:973px;top:566px;font-size:6px;color:#555;">&#709;</div>
<div class="a" style="left:973px;top:562px;width:6px;height:4px;background:#bdbdbd"></div>
<div class="a" style="left:9px;top:563px;width:963px;height:2px;background:rgba(220,220,220,.55)"></div>
<div class="a" style="left:9px;top:563px;width:262px;height:2px;background:rgba(238,238,238,.9)"></div>
<div class="a" style="left:9px;top:563px;width:115px;height:2px;background:#f00"></div>
<svg class="a" style="left:17px;top:574px" width="18" height="13" viewBox="0 0 18 13"><rect x="2.4" y="1.4" width="1.8" height="10.4" fill="#fff"/><path d="M13.6 1.4 L4.6 6.6 L13.6 11.8Z" fill="#fff"/></svg>
<svg class="a" style="left:47px;top:572px" width="18" height="16" viewBox="0 0 18 16"><path d="M3 1 L15 8 L3 15Z" fill="#fff"/></svg>
<svg class="a" style="left:78px;top:574px" width="18" height="13" viewBox="0 0 18 13"><path d="M2.6 1.4 L11.6 6.6 L2.6 11.8Z" fill="#fff"/><rect x="11.8" y="1.4" width="1.8" height="10.4" fill="#fff"/></svg>
<svg class="a" style="left:106px;top:572px" width="20" height="16" viewBox="0 0 20 16"><path d="M1 5 H5 L10 1 V15 L5 11 H1Z" fill="#fff"/><path d="M12.5 4.5 Q15 8 12.5 11.5" stroke="#fff" stroke-width="1.6" fill="none"/><path d="M14.5 2 Q18.5 8 14.5 14" stroke="#fff" stroke-width="1.6" fill="none"/></svg>
<div class="t" style="left:135px;top:575.3px;font-size:10.4px;color:#f2f2f2;letter-spacing:-0.1px">0:18 / 2:36</div>
<div class="a" style="left:0px;top:586px;width:980px;height:10px;background:#131416"></div>
<div class="t" style="left:621px;top:588.5px;font-size:5.5px;color:#7a7a7a;">4598.731,11345.467,0.000</div>
<div class="a" style="left:692px;top:587px;width:1px;height:9px;background:#2a2a2a"></div>
<svg class="a" style="left:698px;top:586px" width="300" height="10" viewBox="0 0 300 10"><g font-family="Liberation Sans" font-size="5.5"><path d="M1 9 L9 2 V9Z" fill="#6a6a6a"/><path d="M12 6 H18 M15 3 V9" stroke="#b03030" stroke-width=".9"/><text x="23" y="7.5" fill="#7a7a7a">OpenGL</text><path d="M51 2 V6 L48 9 M51 6 L54 9" stroke="#8a8a8a" stroke-width=".8" fill="none"/><text x="58" y="7.5" fill="#7a7a7a">1:1</text><rect x="68" y="2" width="8" height="7" fill="#5a6a3a"/><path d="M80 9 L83 3 L86 9" stroke="#aaa" fill="none" stroke-width=".8"/><circle cx="86" cy="3" r="1.2" fill="#d8a030"/><rect x="92" y="1" width="8" height="8" fill="#4a2e2e"/><rect x="103" y="1" width="8" height="8" fill="#2e2e30"/><path d="M115 2 V8 H120" stroke="#4a8a3a" fill="none" stroke-width=".9"/><circle cx="129" cy="5" r="3.5" fill="none" stroke="#7a3a3a" stroke-width=".9"/><rect x="136" y="1" width="6" height="8" fill="#3a2a2a"/><path d="M140 3 V8" stroke="#a04040"/><path d="M147 9 L154 2" stroke="#6a6a6a"/><path d="M159 5.5 H166 M162.5 2 V9" stroke="#7a7a7a"/><text x="169" y="7.5" fill="#6a6a6a">MODEL</text><text x="189" y="7.5" fill="#444">TABLET</text><circle cx="217" cy="5" r="3.3" fill="#2a6ab8"/><rect x="227" y="2" width="3" height="7" fill="#4a4a4a"/><rect x="235" y="1" width="8" height="7" fill="#44525e"/><rect x="245" y="2" width="8" height="7" fill="#46525c"/><circle cx="261" cy="5" r="4" fill="#6a7884"/><circle cx="275" cy="5" r="4.5" fill="#2f7a32"/><path d="M272.5 5 L274.5 7 L277.5 3" stroke="#bfe" stroke-width=".9" fill="none"/></g></svg>
<svg class="a" style="left:825px;top:574px" width="17" height="13" viewBox="0 0 17 13"><rect x=".5" y=".5" width="16" height="12" rx="2" fill="#fff"/><rect x="3" y="6" width="4" height="1.6" fill="#555"/><rect x="8.5" y="6" width="6" height="1.6" fill="#555"/><rect x="3" y="9" width="7" height="1.6" fill="#555"/><rect x="11" y="9" width="3.5" height="1.6" fill="#555"/></svg>
<svg class="a" style="left:855px;top:572px" width="24" height="17" viewBox="0 0 24 17"><g transform="translate(8.5,9)"><circle r="5" fill="#fff"/><g fill="#fff"><rect x="-1.5" y="-7" width="3" height="14"/><rect x="-7" y="-1.5" width="14" height="3"/><rect x="-1.5" y="-7" width="3" height="14" transform="rotate(45)"/><rect x="-1.5" y="-7" width="3" height="14" transform="rotate(-45)"/></g><circle r="2.2" fill="#888"/></g><rect x="11" y="1" width="11" height="7" fill="#e8221c"/><text x="12.2" y="7" font-size="6" font-weight="bold" fill="#fff" font-family="Liberation Sans">HD</text></svg>
<svg class="a" style="left:885px;top:572px" width="21" height="17" viewBox="0 0 21 17"><rect x="1" y="1" width="19" height="15" rx="1.5" fill="none" stroke="#fff" stroke-width="1.8"/><rect x="10" y="8" width="7" height="5" fill="#fff"/></svg>
<svg class="a" style="left:916px;top:575px" width="20" height="12" viewBox="0 0 20 12"><rect x="1" y="1" width="17" height="10" fill="none" stroke="#fff" stroke-width="1.8"/></svg>
<svg class="a" style="left:948px;top:573px" width="17" height="15" viewBox="0 0 17 15"><path d="M1 5 V1 H5 M11 1 H15 V5 M15 10 V14 H11 M5 14 H1 V10" stroke="#fff" stroke-width="1.8" fill="none"/></svg>
<div class="a" style="left:919px;top:94px;width:57px;height:103px;background:#efefef;border:1px solid #c8c8c8"></div>
<div class="t" style="left:923px;top:98.5px;font-size:6px;color:#9a9a9a;">Hot Toggles!</div>
<div class="a" style="left:966px;top:97px;width:9px;height:10px;background:#dcdcdc"></div>
<svg class="a" style="left:921px;top:111.0px" width="7" height="7" viewBox="0 0 7 7"><rect x=".5" y=".5" width="6" height="6" fill="#fff" stroke="#777" stroke-width=".8"/><path d="M1.5 3.5 L3 5.2 L5.8 1.6" stroke="#333" stroke-width="1" fill="none"/></svg>
<div class="t" style="left:929px;top:112.0px;font-size:5.4px;color:#222;">Point Protection</div>
<svg class="a" style="left:921px;top:118.5px" width="7" height="7" viewBox="0 0 7 7"><rect x=".5" y=".5" width="6" height="6" fill="#fff" stroke="#777" stroke-width=".8"/><path d="M1.5 3.5 L3 5.2 L5.8 1.6" stroke="#333" stroke-width="1" fill="none"/></svg>
<div class="t" style="left:929px;top:119.5px;font-size:5.4px;color:#222;">Log File Output</div>
<svg class="a" style="left:921px;top:126.0px" width="7" height="7" viewBox="0 0 7 7"><rect x=".5" y=".5" width="6" height="6" fill="#fff" stroke="#777" stroke-width=".8"/></svg>
<div class="t" style="left:929px;top:127.0px;font-size:5.4px;color:#222;">Input scale</div>
<svg class="a" style="left:921px;top:133.5px" width="7" height="7" viewBox="0 0 7 7"><rect x=".5" y=".5" width="6" height="6" fill="#fff" stroke="#777" stroke-width=".8"/></svg>
<div class="t" style="left:929px;top:134.5px;font-size:5.4px;color:#222;">Output scale</div>
<svg class="a" style="left:921px;top:141.0px" width="7" height="7" viewBox="0 0 7 7"><rect x=".5" y=".5" width="6" height="6" fill="#fff" stroke="#777" stroke-width=".8"/><path d="M1.5 3.5 L3 5.2 L5.8 1.6" stroke="#333" stroke-width="1" fill="none"/></svg>
<div class="t" style="left:929px;top:142.0px;font-size:5.4px;color:#222;">Draw lines/curves</div>
<svg class="a" style="left:921px;top:148.5px" width="7" height="7" viewBox="0 0 7 7"><rect x=".5" y=".5" width="6" height="6" fill="#fff" stroke="#777" stroke-width=".8"/><path d="M1.5 3.5 L3 5.2 L5.8 1.6" stroke="#333" stroke-width="1" fill="none"/></svg>
<div class="t" style="left:929px;top:149.5px;font-size:5.4px;color:#222;">Draw distances</div>
<svg class="a" style="left:921px;top:156.0px" width="7" height="7" viewBox="0 0 7 7"><rect x=".5" y=".5" width="6" height="6" fill="#fff" stroke="#777" stroke-width=".8"/><path d="M1.5 3.5 L3 5.2 L5.8 1.6" stroke="#333" stroke-width="1" fill="none"/></svg>
<div class="t" style="left:929px;top:157.0px;font-size:5.4px;color:#222;">Draw bearings</div>
<div class="t" style="left:922px;top:166.5px;font-size:5.4px;color:#222;">Next pt</div>
<div class="a" style="left:943px;top:164px;width:32px;height:10px;background:#fff;border:1px solid #999"></div>
<div class="t" style="left:945px;top:166.5px;font-size:5.6px;color:#222;">199</div>
<div class="t" style="left:923px;top:177.5px;font-size:5.4px;color:#222;">Low pt</div>
<div class="a" style="left:943px;top:175px;width:32px;height:11px;background:#f0f0f0;border:1px solid #aaa"></div>
<div class="t" style="left:945px;top:177.5px;font-size:5.6px;color:#222;">142</div>
<div class="a" style="left:927px;top:188px;width:40px;height:7px;background:#e1e1e1;border:1px solid #b0b0b0"></div>
<div class="t" style="left:939px;top:188.5px;font-size:5.2px;color:#222;">Refresh</div>
</body></html>
